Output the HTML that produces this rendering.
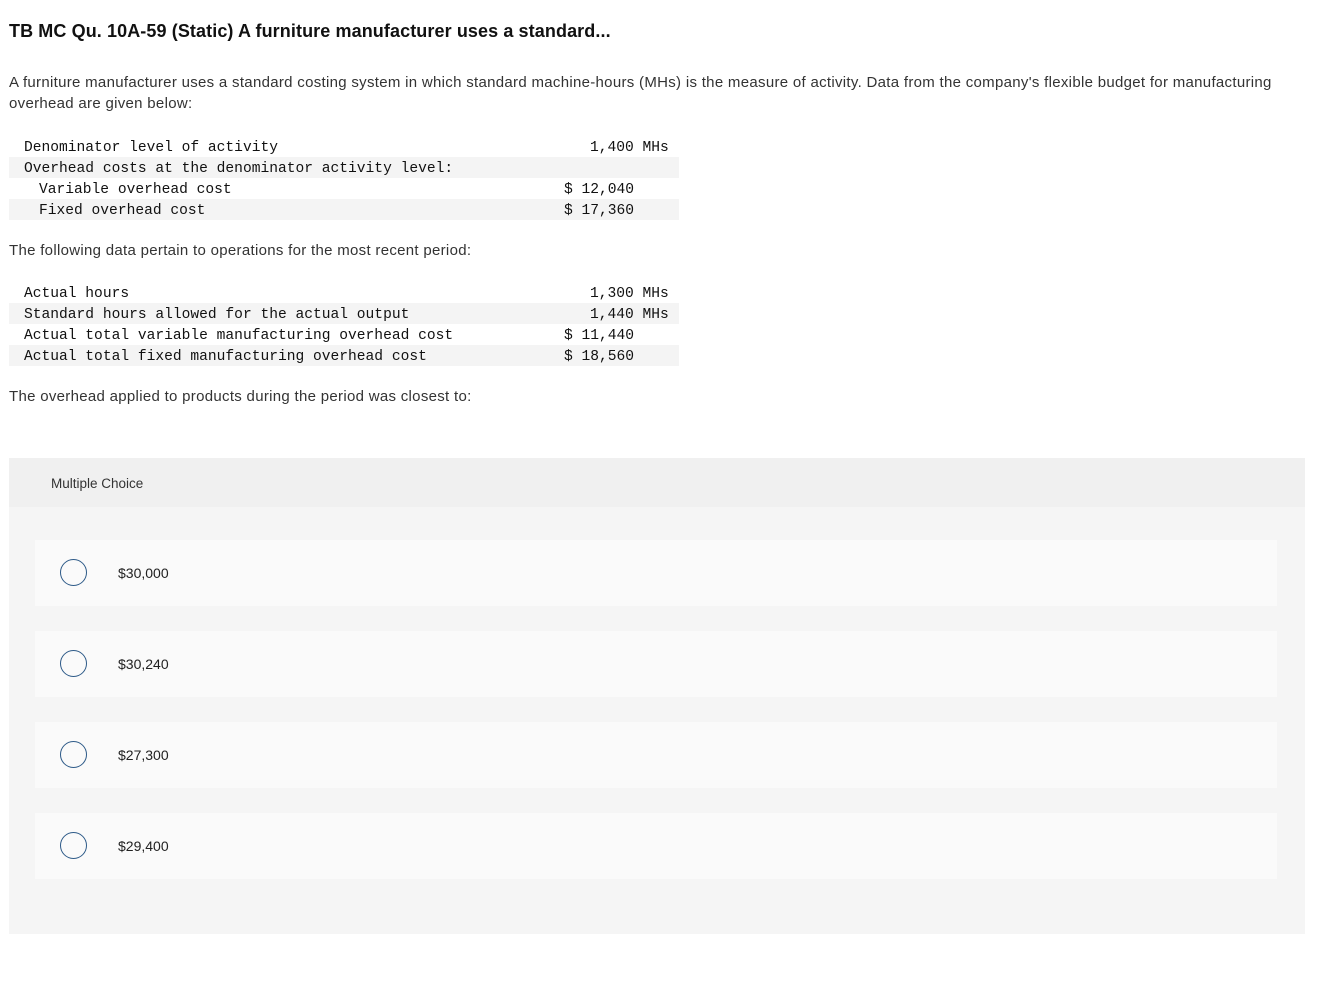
<!DOCTYPE html>
<html><head><meta charset="utf-8"><style>
body{margin:0;background:#fff;font-family:"Liberation Sans",sans-serif;color:#222;}
h1{position:absolute;left:9px;top:21px;margin:0;font-size:18px;font-weight:bold;color:#111;letter-spacing:0.1px}
.p{position:absolute;left:9px;font-size:15px;letter-spacing:0.3px;color:#333;line-height:21px}
.t{position:absolute;left:9px;width:670px;font-family:"Liberation Mono",monospace;font-size:14.6px;color:#111}
.t div{height:21px;line-height:21px;position:relative}
.t div:nth-child(even){background:#f4f4f4}
.t span{position:absolute;top:2px;line-height:21px}
.mc{position:absolute;left:9px;top:458px;width:1296px;height:476px;background:#f5f5f5}
.mh{height:49px;background:#f0f0f0;font-size:13.5px;line-height:51px;padding-left:42px;color:#333}
.o{position:absolute;left:26px;width:1242px;height:66px;background:#fafafa}
.o i{position:absolute;left:25px;top:19px;width:25px;height:25px;border:1.5px solid #2d5a88;border-radius:50%}
.o b{position:absolute;left:83px;top:25px;font-weight:normal;font-size:14px;color:#222}
</style></head><body>
<h1>TB MC Qu. 10A-59 (Static) A furniture manufacturer uses a standard...</h1>
<div class="p" style="top:72px;width:1295px">A furniture manufacturer uses a standard costing system in which standard machine-hours (MHs) is the measure of activity. Data from the company's flexible budget for manufacturing overhead are given below:</div>
<div class="t" style="top:136px">
<div><span style="left:15px">Denominator level of activity</span><span style="left:581px">1,400 MHs</span></div>
<div><span style="left:15px">Overhead costs at the denominator activity level:</span></div>
<div><span style="left:30px">Variable overhead cost</span><span style="left:555px">$ 12,040</span></div>
<div><span style="left:30px">Fixed overhead cost</span><span style="left:555px">$ 17,360</span></div>
</div>
<div class="p" style="top:240px">The following data pertain to operations for the most recent period:</div>
<div class="t" style="top:282px">
<div><span style="left:15px">Actual hours</span><span style="left:581px">1,300 MHs</span></div>
<div><span style="left:15px">Standard hours allowed for the actual output</span><span style="left:581px">1,440 MHs</span></div>
<div><span style="left:15px">Actual total variable manufacturing overhead cost</span><span style="left:555px">$ 11,440</span></div>
<div><span style="left:15px">Actual total fixed manufacturing overhead cost</span><span style="left:555px">$ 18,560</span></div>
</div>
<div class="p" style="top:386px">The overhead applied to products during the period was closest to:</div>
<div class="mc"><div class="mh">Multiple Choice</div>
<div class="o" style="top:82px"><i></i><b>$30,000</b></div>
<div class="o" style="top:173px"><i></i><b>$30,240</b></div>
<div class="o" style="top:264px"><i></i><b>$27,300</b></div>
<div class="o" style="top:355px"><i></i><b>$29,400</b></div>
</div>
</body></html>
